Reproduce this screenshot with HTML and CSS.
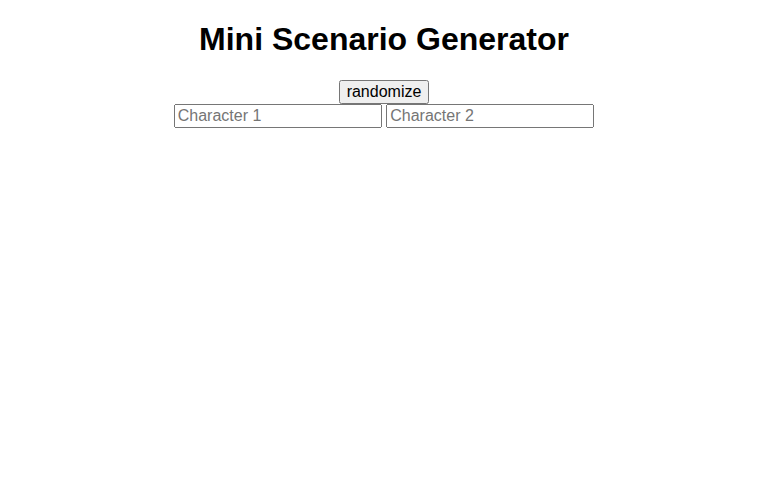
FILE: index.html
```html
<!DOCTYPE html>
<html lang="en">
  <head>
    <meta charset="UTF-8" />
    <meta name="viewport" content="width=device-width, initial-scale=1.0" />
    <title>Mini Scenario Generator</title>
    <link rel="stylesheet" href="styles.css">
  </head>
  <body>
    <h1>Mini Scenario Generator</h1>

    <div class="controls">
      <button id="randomize">randomize</button>
      <br />
      <input type="text" id="char1" placeholder="Character 1" />
      <input type="text" id="char2" placeholder="Character 2" />
    </div>
  </body>
</html>
```

FILE: styles.css
```css
body {
  font-family: "Liberation Sans", Arial, sans-serif;
  text-align: center;
  margin: 0;
}
button,
input {
  font-family: inherit;
  font-size: 16px;
}
input[type="text"] {
  width: 200px;
}
```
